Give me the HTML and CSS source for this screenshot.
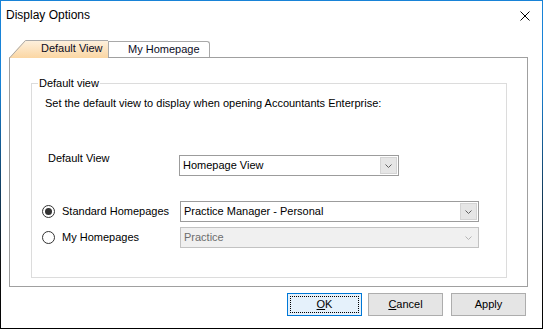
FILE: index.html
```html
<!DOCTYPE html>
<html>
<head>
<meta charset="utf-8">
<title>Display Options</title>
<link rel="stylesheet" href="styles.css">
</head>
<body>
<div class="window">
  <div class="titlebar">
    <span class="title">Display Options</span>
    <span class="close">
      <svg width="10" height="10" viewBox="0 0 10 10"><path d="M0.5 0.5 L9.5 9.5 M9.5 0.5 L0.5 9.5" stroke="#000" stroke-width="1" fill="none"/></svg>
    </span>
  </div>
  <div class="tabs">
    <div class="tab tab-active">
      <svg class="tab-bg" width="99" height="18" viewBox="0 0 99 18">
        <defs>
          <linearGradient id="tg" x1="0" y1="0" x2="0" y2="1">
            <stop offset="0" stop-color="#fdf1e0"/>
            <stop offset="1" stop-color="#fbd6a3"/>
          </linearGradient>
        </defs>
        <path d="M0 18 L16 0 L99 0 L99 18 Z" fill="url(#tg)"/>
        <path d="M0.5 18 L16.5 0.5 L99 0.5" stroke="#a9a9a9" stroke-width="1" fill="none"/>
      </svg>
      <span class="tab-text">Default View</span>
    </div>
    <div class="tab tab-plain"><span class="tab-text">My Homepage</span></div>
  </div>
  <div class="panel">
    <div class="group">
      <span class="group-label">Default view</span>
      <p class="intro">Set the default view to display when opening Accountants Enterprise:</p>
      <div class="row view-row">
        <span class="field-label">Default View</span>
        <div class="combo combo-short">
          <span class="combo-text">Homepage View</span>
          <span class="combo-btn"><svg width="7" height="4" viewBox="0 0 7 4"><path d="M0.5 0.5 L3.5 3.5 L6.5 0.5" stroke="#606060" fill="none"/></svg></span>
        </div>
      </div>
      <div class="row radio-row first-radio">
        <span class="radio checked"></span>
        <span class="radio-label">Standard Homepages</span>
        <div class="combo combo-long">
          <span class="combo-text">Practice Manager - Personal</span>
          <span class="combo-btn"><svg width="7" height="4" viewBox="0 0 7 4"><path d="M0.5 0.5 L3.5 3.5 L6.5 0.5" stroke="#606060" fill="none"/></svg></span>
        </div>
      </div>
      <div class="row radio-row second-radio">
        <span class="radio"></span>
        <span class="radio-label">My Homepages</span>
        <div class="combo combo-long combo-disabled">
          <span class="combo-text">Practice</span>
          <span class="combo-btn"><svg width="7" height="4" viewBox="0 0 7 4"><path d="M0.5 0.5 L3.5 3.5 L6.5 0.5" stroke="#b4b4b4" fill="none"/></svg></span>
        </div>
      </div>
    </div>
  </div>
  <div class="buttons">
    <button class="btn btn-default"><span class="focus"><u>O</u>K</span></button>
    <button class="btn btn-cancel"><span class="focus-none"><u>C</u>ancel</span></button>
    <button class="btn btn-apply"><span class="focus-none">Apply</span></button>
  </div>
</div>
</body>
</html>
```

FILE: styles.css
```css
html, body {
  margin: 0;
  padding: 0;
  background: #ffffff;
}
body {
  width: 543px;
  height: 329px;
  overflow: hidden;
  font-family: "Liberation Sans", Arial, sans-serif;
  font-size: 11px;
  color: #000;
}
.window {
  box-sizing: border-box;
  width: 543px;
  height: 329px;
  border: 1px solid #1883d7;
  border-image: linear-gradient(to bottom, #1883d7 0%, #1883d7 25%, #101010 80%, #000 100%) 1;
  background: #fff;
  display: flex;
  flex-direction: column;
}
.titlebar {
  height: 29px;
  display: flex;
  align-items: center;
  padding-left: 5px;
  flex: none;
}
.title {
  font-size: 12px;
  line-height: 15px;
  color: #000;
}
.close {
  margin-left: auto;
  margin-right: 12px;
  width: 10px;
  height: 10px;
  display: flex;
}
.tabs {
  display: flex;
  align-items: flex-end;
  margin: 10px 0 0 8px;
  height: 17px;
  flex: none;
}
.tab {
  position: relative;
  box-sizing: border-box;
  line-height: 15px;
}
.tab-active {
  width: 99px;
  height: 18px;
  margin-bottom: -1px;
  z-index: 1;
  padding: 1px 0 0 32px;
}
.tab-bg {
  position: absolute;
  left: 0;
  top: 0;
}
.tab-text {
  position: relative;
  color: #0c0c1e;
}
.tab-plain {
  width: 102px;
  height: 16px;
  border: 1px solid #a9a9a9;
  border-bottom: none;
  border-top-right-radius: 3px;
  padding: 0 0 0 19px;
}
.panel {
  box-sizing: border-box;
  margin-left: 8px;
  width: 519px;
  height: 230px;
  border: 1px solid #a0a0a0;
  padding: 25px 0 0 21px;
  flex: none;
}
.group {
  position: relative;
  box-sizing: border-box;
  width: 476px;
  height: 195px;
  border: 1px solid #dcdcdc;
}
.group-label {
  position: absolute;
  top: -8px;
  left: 6px;
  padding: 0 1px;
  background: #fff;
  line-height: 15px;
}
.intro {
  margin: 12px 0 0 13px;
  line-height: 15px;
}
.row {
  display: flex;
}
.view-row {
  margin-top: 40px;
  padding-left: 16px;
  align-items: flex-start;
}
.field-label {
  width: 131px;
  line-height: 15px;
}
.view-row .combo {
  margin-top: 4px;
}
.combo {
  box-sizing: border-box;
  height: 21px;
  border: 1px solid #9c9c9c;
  background: #fff;
  display: flex;
  align-items: center;
  padding: 1px;
}
.combo-short {
  width: 220px;
}
.combo-long {
  width: 299px;
}
.combo-text {
  flex: 1;
  padding-left: 2px;
  line-height: 15px;
}
.combo-btn {
  box-sizing: border-box;
  width: 17px;
  height: 17px;
  background: #e6e6e6;
  border: 1px solid #d4d4d4;
  display: flex;
  align-items: center;
  justify-content: center;
}
.combo-disabled {
  background: #f0f0f0;
  border-color: #c2c2c2;
}
.combo-disabled .combo-text {
  color: #6d6d6d;
}
.combo-disabled .combo-btn {
  background: #f0f0f0;
  border-color: #f0f0f0;
}
.radio-row {
  align-items: center;
  padding-left: 10px;
}
.first-radio {
  margin-top: 25px;
}
.second-radio {
  margin-top: 5px;
}
.radio {
  box-sizing: border-box;
  width: 13px;
  height: 13px;
  border: 1px solid #333;
  border-radius: 50%;
  display: flex;
  align-items: center;
  justify-content: center;
  flex: none;
}
.radio.checked::after {
  content: "";
  width: 7px;
  height: 7px;
  border-radius: 50%;
  background: #333;
}
.radio-label {
  width: 118px;
  margin-left: 7px;
  line-height: 15px;
  margin-top: -1px;
}
.buttons {
  display: flex;
  justify-content: flex-end;
  margin-top: 6px;
  padding-right: 16px;
}
.btn {
  box-sizing: border-box;
  width: 75px;
  height: 23px;
  margin: 0;
  padding: 0;
  font-family: "Liberation Sans", Arial, sans-serif;
  font-size: 11px;
  color: #000;
  border: 1px solid #adadad;
  background: #e5e5e5;
  display: flex;
  align-items: stretch;
  justify-content: stretch;
}
.btn-default {
  border-color: #0078d7;
  background: #e5f1fb;
}
.btn-cancel {
  margin-left: 6px;
}
.btn-apply {
  margin-left: 8px;
}
.focus, .focus-none {
  flex: 1;
  margin: 2px;
  display: flex;
  align-items: center;
  justify-content: center;
  line-height: 15px;
}
.focus {
  border: 1px dotted #000;
  margin: 2px;
}
.focus-none {
  border: 1px solid transparent;
}
u {
  text-decoration: underline;
  text-underline-offset: 1px;
}
```
